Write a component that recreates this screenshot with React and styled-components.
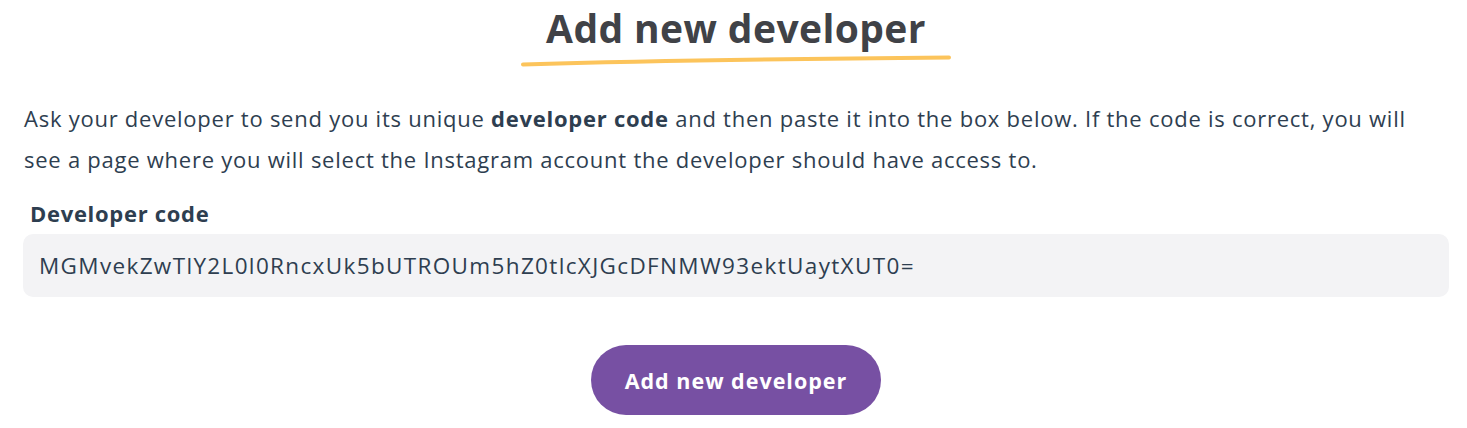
import React from "react";
import styled, { createGlobalStyle } from "styled-components";

const GlobalStyle = createGlobalStyle`
  body {
    margin: 0;
    background: #ffffff;
    font-family: "Open Sans", Lato, Arial, sans-serif;
  }
`;

const Page = styled.div`
  padding: 0 18px 0 23px;
  display: flex;
  flex-direction: column;
`;

const TitleWrap = styled.div`
  display: flex;
  flex-direction: column;
  align-items: center;
  padding-top: 4px;
`;

const Title = styled.h1`
  margin: 0;
  font-size: 39px;
  font-weight: 700;
  line-height: 48px;
  letter-spacing: 0.4px;
  color: #404247;
`;

const Underline = styled.svg`
  display: block;
  margin-top: 3px;
`;

const Intro = styled.p`
  margin: 31px 0 0 1px;
  font-size: 22px;
  line-height: 41px;
  letter-spacing: 0.75px;
  color: #2e3e50;

  & b {
    font-weight: 700;
  }
`;

const Label = styled.label`
  display: block;
  margin: 20px 0 0 7px;
  font-size: 22px;
  font-weight: 700;
  line-height: 26px;
  letter-spacing: 0.7px;
  color: #2e3e50;
`;

const CodeInput = styled.input`
  box-sizing: border-box;
  margin-top: 8px;
  width: 100%;
  height: 63px;
  border: none;
  border-radius: 10px;
  background: #f3f3f5;
  padding: 0 16px;
  font-family: inherit;
  font-size: 22.5px;
  letter-spacing: 1.35px;
  color: #2e3e50;
  outline: none;
`;

const Actions = styled.div`
  display: flex;
  justify-content: center;
  margin-top: 48px;
`;

const Button = styled.button`
  width: 290px;
  height: 70px;
  border: none;
  border-radius: 35px;
  background: #7750a3;
  color: #ffffff;
  font-family: inherit;
  font-size: 21.5px;
  font-weight: 700;
  letter-spacing: 1px;
  cursor: pointer;
`;

export default function App() {
  return (
    <>
      <GlobalStyle />
      <Page>
        <TitleWrap>
          <Title>Add new developer</Title>
          <Underline width="430" height="12" viewBox="0 0 430 12">
            <path
              d="M2 9.5 C 120 6, 300 3.5, 428 2.5"
              stroke="#fcc45b"
              strokeWidth="4"
              strokeLinecap="round"
              fill="none"
            />
          </Underline>
        </TitleWrap>
        <Intro>
          Ask your developer to send you its unique <b>developer code</b> and
          then paste it into the box below. If the code is correct, you will
          <br />
          see a page where you will select the Instagram account the developer
          should have access to.
        </Intro>
        <Label htmlFor="code">Developer code</Label>
        <CodeInput
          id="code"
          readOnly
          value="MGMvekZwTlY2L0l0RncxUk5bUTROUm5hZ0tlcXJGcDFNMW93ektUaytXUT0="
        />
        <Actions>
          <Button>Add new developer</Button>
        </Actions>
      </Page>
    </>
  );
}
